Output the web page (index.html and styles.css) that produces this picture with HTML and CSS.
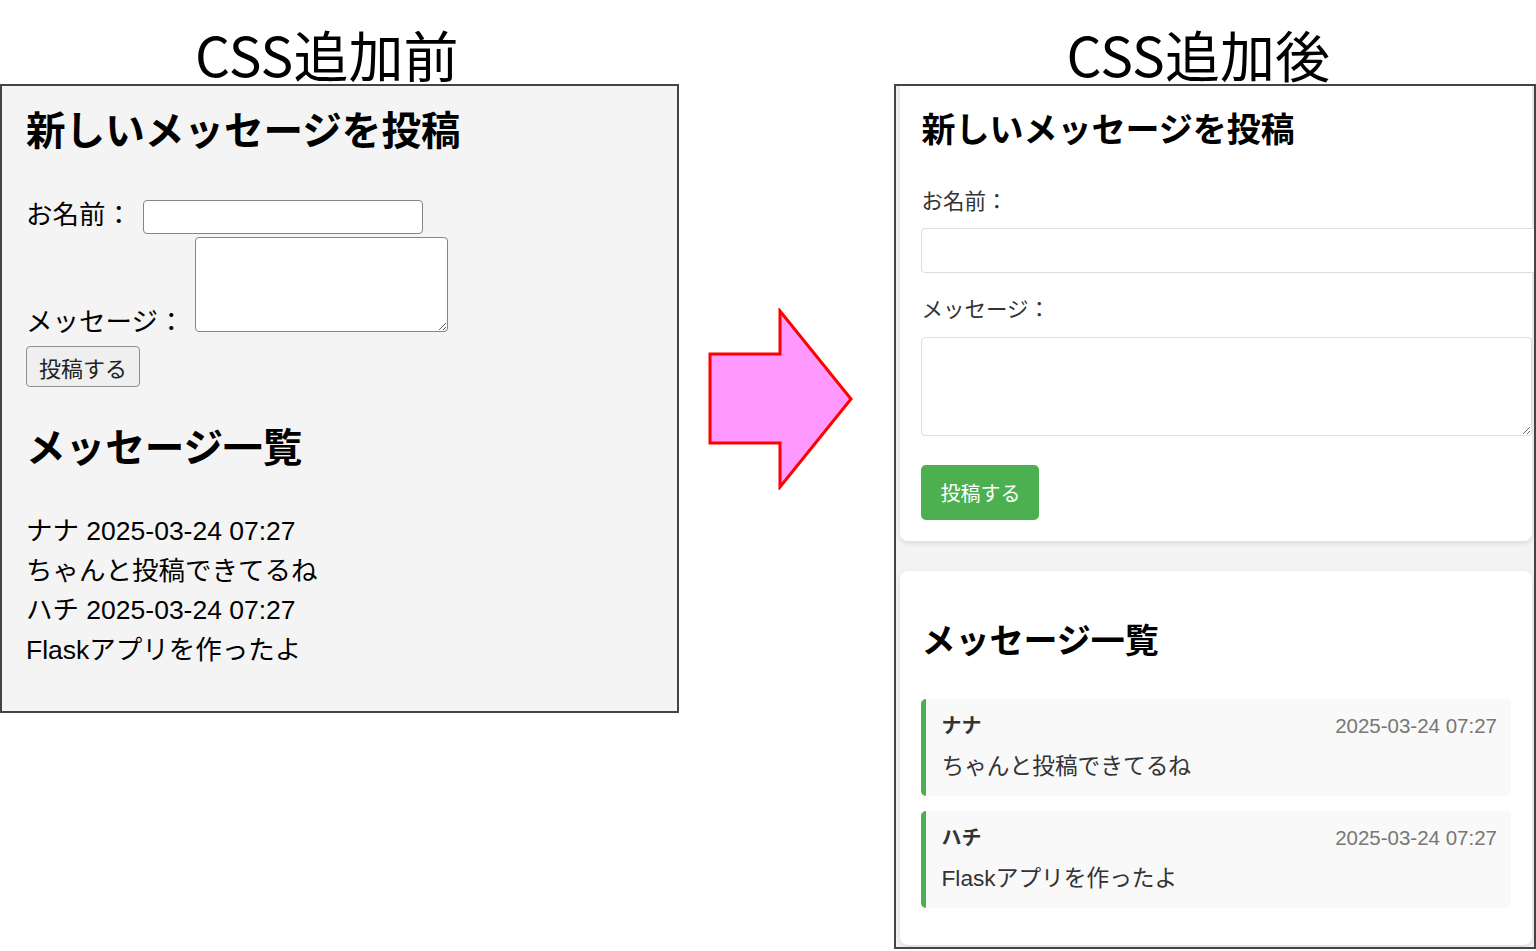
FILE: index.html
```html
<!DOCTYPE html>
<html lang="ja">
<head>
  <meta charset="UTF-8">
  <title>CSS追加前 / CSS追加後</title>
  <link rel="stylesheet" href="styles.css">
</head>
<body>
  <div class="compare">

    <div class="side side-before">
      <h1 class="caption">CSS追加前</h1>
      <div class="before">
        <h2>新しいメッセージを投稿</h2>
        <form>
          <div class="field">
            <label>お名前：</label>
            <input type="text">
          </div>
          <div class="field field-area">
            <label>メッセージ：</label>
            <textarea></textarea>
          </div>
          <button type="button">投稿する</button>
        </form>
        <h2 class="list-title">メッセージ一覧</h2>
        <div class="messages">
          <div>ナナ 2025-03-24 07:27</div>
          <div>ちゃんと投稿できてるね</div>
          <div>ハチ 2025-03-24 07:27</div>
          <div>Flaskアプリを作ったよ</div>
        </div>
      </div>
    </div>

    <div class="arrow">
      <svg width="146" height="182" viewBox="0 0 146 182">
        <polygon points="2,46 72,46 72,3 143,91 72,179 72,135 2,135" fill="#ff99ff" stroke="#ff0000" stroke-width="3"/>
      </svg>
    </div>

    <div class="side side-after">
      <h1 class="caption">CSS追加後</h1>
      <div class="after">
        <div class="card card-form">
          <h2>新しいメッセージを投稿</h2>
          <form>
            <label>お名前：</label>
            <input type="text" class="name-input">
            <label>メッセージ：</label>
            <textarea></textarea>
            <button type="button">投稿する</button>
          </form>
        </div>
        <div class="card card-list">
          <h2>メッセージ一覧</h2>
          <div class="message">
            <div class="message-head">
              <span class="message-name">ナナ</span>
              <span class="message-date">2025-03-24 07:27</span>
            </div>
            <div class="message-text">ちゃんと投稿できてるね</div>
          </div>
          <div class="message">
            <div class="message-head">
              <span class="message-name">ハチ</span>
              <span class="message-date">2025-03-24 07:27</span>
            </div>
            <div class="message-text">Flaskアプリを作ったよ</div>
          </div>
        </div>
      </div>
    </div>

  </div>
</body>
</html>
```

FILE: styles.css
```css
* {
  box-sizing: border-box;
}
body {
  margin: 0;
  background-color: #ffffff;
  font-family: "Liberation Sans", "Noto Sans CJK JP", sans-serif;
  color: #000;
}
.compare {
  display: flex;
  align-items: flex-start;
}
.caption {
  margin: 0;
  height: 84px;
  padding-top: 26px;
  font-family: "Noto Sans CJK JP", sans-serif;
  font-size: 55px;
  font-weight: 400;
  line-height: 1;
  text-align: center;
}
.side-before {
  width: 680px;
}
.side-before .caption {
  padding-right: 26px;
}
.side-after {
  width: 642px;
}
.side-after .caption {
  padding-right: 34px;
}
.arrow {
  margin: 308px 40px 0 29px;
}
.arrow svg {
  display: block;
}

/* before: browser defaults, scaled */
.before {
  border: 2px solid #444;
  background-color: #f4f4f4;
  padding: 0 24px 41px;
  font-size: 26.5px;
}
.before h2 {
  margin: 22px 0 0;
  font-size: 39.6px;
  line-height: 47px;
}
.before .field {
  display: flex;
  align-items: center;
  gap: 11px;
  margin-top: 3px;
}
.before .field:first-child {
  margin-top: 45px;
}
.before .field label {
  line-height: 1;
  margin-bottom: 4px;
}
.before .field-area {
  align-items: flex-end;
}
.before .field-area label {
  margin-bottom: -3px;
}
.before input {
  width: 280px;
  height: 34px;
  border: 1px solid #858585;
  border-radius: 4px;
  background: #fff;
}
.before textarea {
  width: 253px;
  height: 95px;
  border: 1px solid #858585;
  border-radius: 4px;
  background: #fff;
}
.before button {
  display: block;
  margin-top: 14px;
  width: 114px;
  height: 41px;
  padding: 0;
  font-family: inherit;
  font-size: 22px;
  color: #222;
  background-color: #efefef;
  border: 1px solid #8f8f8f;
  border-radius: 4px;
}
.before .list-title {
  margin-top: 38px;
}
.before .messages {
  margin-top: 40px;
  line-height: 39.5px;
}

/* after: styled page */
.after {
  height: 865px;
  border: 2px solid #444;
  background-color: #f4f4f4;
  padding: 0 2px 0 4px;
  overflow: hidden;
  font-size: 21.5px;
  color: #333;
}
.card {
  background-color: #fff;
  border-radius: 8px;
  box-shadow: 0 2px 6px rgba(0,0,0,0.12);
  padding: 0 21px;
}
.card h2 {
  margin: 0;
  font-size: 34px;
  line-height: 41px;
  color: #000;
}
.card-form {
  margin-top: -10px;
  padding-top: 34px;
  padding-bottom: 21px;
}
.card-form label {
  display: block;
  margin-top: 39px;
  line-height: 25px;
}
.card-form textarea + button {
  margin-top: 29px;
}
.card-form .name-input + label {
  margin-top: 25px;
}
.card-form input {
  display: block;
  margin-top: 13px;
  width: calc(100% + 40px);
  height: 45px;
  border: 1px solid #ddd;
  border-radius: 4px;
  padding: 10px;
}
.card-form textarea {
  display: block;
  margin-top: 14px;
  width: calc(100% + 21px);
  height: 99px;
  border: 1px solid #ddd;
  border-radius: 4px;
  padding: 10px;
}
.card-form button {
  display: block;
  width: 118px;
  height: 55px;
  padding: 0;
  font-family: inherit;
  font-size: 20px;
  color: #fff;
  background-color: #4CAF50;
  border: none;
  border-radius: 5px;
}
.card-list {
  margin-top: 30px;
  padding-top: 50px;
  padding-bottom: 37px;
}
.message {
  margin-top: 15px;
  background-color: #f9f9f9;
  border-left: 5px solid #4CAF50;
  border-radius: 5px;
  padding: 15px 14px 17px 15px;
}
.card-list h2 + .message {
  margin-top: 37px;
}
.message-head {
  display: flex;
  justify-content: space-between;
  align-items: center;
  line-height: 24px;
}
.message-name {
  font-size: 20px;
  font-weight: bold;
}
.message-date {
  font-size: 20.5px;
  color: #777;
}
.message-text {
  margin-top: 15px;
  font-size: 22.7px;
  line-height: 26px;
}
```
